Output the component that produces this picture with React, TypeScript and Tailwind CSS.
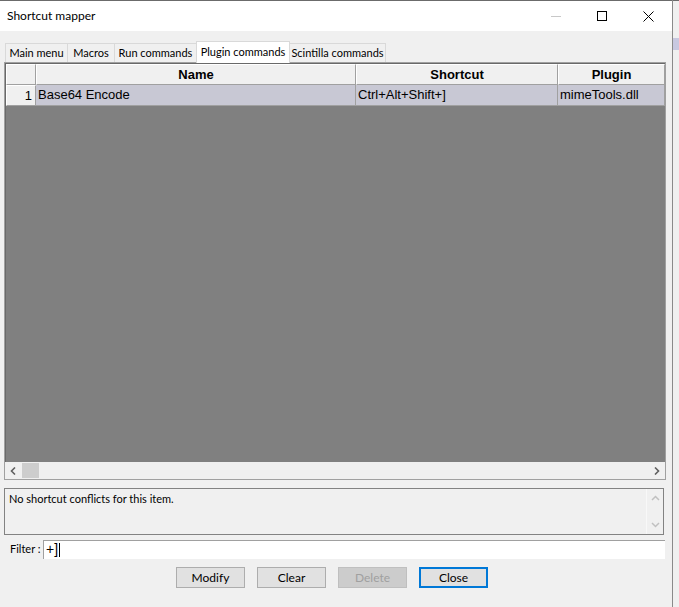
import React from "react";

const tabs = ["Main menu", "Macros", "Run commands", "Plugin commands", "Scintilla commands"];
const tabWidths = [63, 48, 83, 94, 97];

const ui = { fontFamily: 'Lato, "Liberation Sans", sans-serif' };
const grid = { fontFamily: '"Liberation Sans", Arial, sans-serif' };

function HeaderCell({ w, label }: { w: string; label?: string }) {
  return (
    <div
      className={`${w} h-[21px] shrink-0 flex items-center justify-center bg-[#f0f0f0] border-t border-l border-white border-r border-b border-r-[#a0a0a0] border-b-[#a0a0a0] text-[13px] font-bold text-black`}
      style={grid}
    >
      {label}
    </div>
  );
}

function Btn({ label, disabled, focus }: { label: string; disabled?: boolean; focus?: boolean }) {
  return (
    <button
      className={
        "w-[69px] h-[21px] text-[12px] flex items-center justify-center " +
        (disabled
          ? "bg-[#cccccc] border border-[#bfbfbf] text-[#a0a0a0]"
          : focus
          ? "bg-[#e1e1e1] border-2 border-[#0078d7] text-black"
          : "bg-[#e1e1e1] border border-[#adadad] text-black")
      }
      style={ui}
    >
      {label}
    </button>
  );
}

export default function App() {
  return (
    <div className="w-[679px] h-[607px] flex bg-[#f0f0f0] overflow-hidden">
      <div className="w-[673px] h-full flex flex-col border-r border-[#8a8a8a] shrink-0">
        <div className="h-[1px] bg-[#6b6b6b]" />
        {/* title bar */}
        <div className="h-[30px] bg-white flex items-center shrink-0">
          <span className="ml-[7px] text-[12px] text-black whitespace-nowrap" style={ui}>
            Shortcut mapper
          </span>
          <div className="ml-auto flex items-center h-full">
            <div className="w-[46px] h-full flex items-center justify-center">
              <div className="w-[10px] h-[1px] bg-[#c8c8c8]" />
            </div>
            <div className="w-[46px] h-full flex items-center justify-center">
              <div className="w-[10px] h-[10px] border border-black" />
            </div>
            <div className="w-[46px] h-full flex items-center justify-center mr-[1px]">
              <svg width="11" height="11" viewBox="0 0 11 11">
                <path d="M0.5 0.5 L10.5 10.5 M10.5 0.5 L0.5 10.5" stroke="#000" strokeWidth="1" />
              </svg>
            </div>
          </div>
        </div>

        <div className="flex-1 flex flex-col px-[4px]">
          {/* tabs */}
          <div className="h-[31px] flex items-end pl-[1px] shrink-0">
            {tabs.map((t, i) =>
              i === 3 ? (
                <div
                  key={t}
                  className="h-[22px] -mb-[1px] -ml-[1px] bg-white border border-b-0 border-[#d9d9d9] flex items-start pt-[2px] justify-center text-[11px] text-black relative z-10 whitespace-nowrap"
                  style={{ ...ui, width: tabWidths[i] }}
                >
                  {t}
                </div>
              ) : (
                <div
                  key={t}
                  className="h-[19px] bg-[#f0f0f0] border border-b-0 border-[#d9d9d9] -ml-[1px] first:ml-0 flex items-center justify-center text-[11px] text-black whitespace-nowrap"
                  style={{ ...ui, width: tabWidths[i] }}
                >
                  {t}
                </div>
              )
            )}
          </div>

          {/* grid */}
          <div className="h-[418px] w-[662px] border border-[#a0a0a0] bg-[#808080] flex flex-col shrink-0">
            <div className="border border-[#696969] border-r-0 border-b-0 flex-1 flex flex-col">
              <div className="flex">
                <HeaderCell w="w-[30px]" />
                <HeaderCell w="w-[320px]" label="Name" />
                <HeaderCell w="w-[202px]" label="Shortcut" />
                <HeaderCell w="w-[107px]" label="Plugin" />
              </div>
              <div className="flex h-[21px]" style={grid}>
                <div className="w-[30px] h-full bg-[#f0f0f0] border-r border-b border-[#a0a0a0] border-t border-l border-t-white border-l-white flex items-center justify-end pr-[3px] text-[13px] text-black">
                  1
                </div>
                <div className="w-[320px] h-full bg-[#c8c8d4] border-r border-b border-[#a0a0a0] flex items-center pl-[2px] text-[13px] text-black">
                  Base64 Encode
                </div>
                <div className="w-[202px] h-full bg-[#c8c8d4] border-r border-b border-[#a0a0a0] flex items-center pl-[2px] text-[13px] text-black">
                  Ctrl+Alt+Shift+]
                </div>
                <div className="w-[107px] h-full bg-[#c8c8d4] border-r border-b border-[#a0a0a0] flex items-center pl-[2px] text-[13px] text-black">
                  mimeTools.dll
                </div>
              </div>
              <div className="flex-1" />
            </div>
            {/* horizontal scrollbar */}
            <div className="h-[17px] bg-[#f0f0f0] flex items-center shrink-0">
              <div className="w-[17px] h-full flex items-center justify-center">
                <svg width="7" height="8" viewBox="0 0 7 8">
                  <path d="M5 0.5 L1.5 4 L5 7.5" stroke="#606060" strokeWidth="1.6" fill="none" />
                </svg>
              </div>
              <div className="w-[17px] h-[15px] bg-[#cdcdcd]" />
              <div className="flex-1" />
              <div className="w-[17px] h-full flex items-center justify-center">
                <svg width="7" height="8" viewBox="0 0 7 8">
                  <path d="M2 0.5 L5.5 4 L2 7.5" stroke="#606060" strokeWidth="1.6" fill="none" />
                </svg>
              </div>
            </div>
          </div>

          {/* conflicts box */}
          <div className="mt-[8px] h-[47px] w-[660px] border border-[#828282] bg-[#f0f0f0] flex shrink-0">
            <div className="flex-1 pl-[4px] pt-[2px] text-[11px] text-black" style={ui}>
              No shortcut conflicts for this item.
            </div>
            <div className="w-[17px] h-full flex flex-col items-center justify-between py-[6px] border-l border-[#f8f8f8]">
              <svg width="9" height="6" viewBox="0 0 9 6">
                <path d="M1 5 L4.5 1.5 L8 5" stroke="#c0c0c0" strokeWidth="1.5" fill="none" />
              </svg>
              <svg width="9" height="6" viewBox="0 0 9 6">
                <path d="M1 1 L4.5 4.5 L8 1" stroke="#c0c0c0" strokeWidth="1.5" fill="none" />
              </svg>
            </div>
          </div>

          {/* filter */}
          <div className="mt-[4px] flex items-center h-[20px] shrink-0">
            <span className="ml-[6px] w-[33px] text-[11px] text-black whitespace-nowrap" style={ui}>
              Filter :
            </span>
            <div className="w-[622px] h-[19px] bg-white border-l border-t border-[#a0a0a0] flex items-center pl-[2px] text-[14px] text-black" style={grid}>
              +]
              <span className="w-[1px] h-[14px] bg-black ml-[1px]" />
            </div>
          </div>

          {/* buttons */}
          <div className="mt-[8px] flex gap-[12px] pl-[172px] shrink-0">
            <Btn label="Modify" />
            <Btn label="Clear" />
            <Btn label="Delete" disabled />
            <Btn label="Close" focus />
          </div>
        </div>
      </div>
      <div className="flex-1 flex flex-col">
        <div className="h-[1px] bg-[#6b6b6b]" />
        <div className="h-[37px]" />
        <div className="h-[12px] bg-[#c8c8e0]" />
        <div className="flex-1 bg-[#f0f0f0]" />
      </div>
    </div>
  );
}
